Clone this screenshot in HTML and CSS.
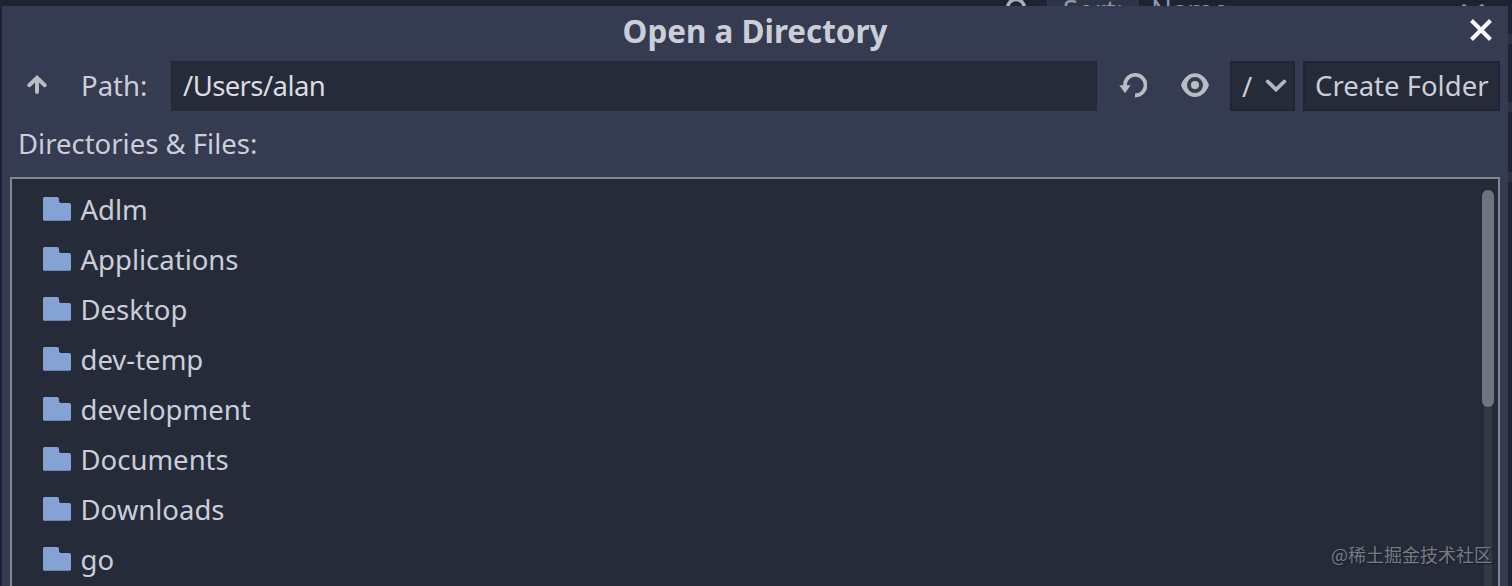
FILE: index.html
```html
<!DOCTYPE html>
<html lang="en">
<head>
<meta charset="utf-8">
<title>Open a Directory</title>
<link rel="stylesheet" href="styles.css">
</head>
<body>
<div class="backdrop">
  <svg class="search" width="24" height="24" viewBox="0 0 24 24"><circle cx="12" cy="9" r="8.5"/></svg>
  <span class="sort-label">Sort:</span>
  <span class="sort-value">Name</span>
  <svg class="sort-arrow" width="24" height="12" viewBox="0 0 24 12"><path d="M3 3l9 8 9-8"/></svg>
  <i class="edge edge-a"></i><i class="edge edge-b"></i><i class="edge edge-c"></i>
</div>
<main class="dialog">
  <header class="titlebar">
    <h1 class="title">Open a Directory</h1>
    <svg class="close" width="24" height="24" viewBox="0 0 24 24"><path d="M2.5 2.5l19 19M21.5 2.5l-19 19"/></svg>
  </header>
  <div class="toolbar">
    <svg class="icon up" width="28" height="28" viewBox="0 0 28 28"><path d="M14 21V7.5M6.2 14.2L14 6.8l7.8 7.4"/></svg>
    <span class="path-label">Path:</span>
    <div class="path-input">/Users/alan</div>
    <svg class="icon reload" width="28" height="28" viewBox="0 0 28 28"><path class="arc" d="M6 15.3A10.3 10.3 0 1 1 16 24.5"/><path class="head" d="M0.3 14.2h11.3l-5.5 8z"/></svg>
    <svg class="icon eye" width="28" height="28" viewBox="0 0 28 28"><path fill-rule="evenodd" d="M14 2.2C20 2.2 25.5 7 27.7 13.2Q28 14.1 27.7 15C25.5 21.2 20 26 14 26S2.5 21.2.3 15Q0 14.1.3 13.2C2.5 7 8 2.2 14 2.2zM14 6.1a8 8 0 1 0 0 16 8 8 0 0 0 0-16z"/><circle cx="14" cy="14.1" r="4.1"/></svg>
    <div class="button drive"><span>/</span><svg width="22" height="14" viewBox="0 0 22 14"><path d="M2.7 2.5l8.3 8 8.3-8"/></svg></div>
    <div class="button create">Create Folder</div>
  </div>
  <div class="section-label">Directories &amp; Files:</div>
  <section class="list">
    <svg class="defs" width="0" height="0"><symbol id="folder" viewBox="0 0 28 24"><path d="M1.5 0H14q2 0 2 2v2q0 2 2 2h8.3q1.7 0 1.7 1.7v14.5q0 1.5-1.5 1.5h-25Q0 23.7 0 22.2V1.5Q0 0 1.5 0z"/></symbol></svg>
    <ul class="files">
      <li><svg class="folder"><use href="#folder"/></svg>Adlm</li>
      <li><svg class="folder"><use href="#folder"/></svg>Applications</li>
      <li><svg class="folder"><use href="#folder"/></svg>Desktop</li>
      <li><svg class="folder"><use href="#folder"/></svg>dev-temp</li>
      <li><svg class="folder"><use href="#folder"/></svg>development</li>
      <li><svg class="folder"><use href="#folder"/></svg>Documents</li>
      <li><svg class="folder"><use href="#folder"/></svg>Downloads</li>
      <li><svg class="folder"><use href="#folder"/></svg>go</li>
    </ul>
    <div class="scrollbar"><div class="track"></div><div class="thumb"></div></div>
  </section>
</main>
<div class="watermark">@稀土掘金技术社区</div>
</body>
</html>
```
FILE: styles.css
```css
* { box-sizing: border-box; }
body {
  margin: 0;
  position: relative;
  width: 1512px;
  height: 586px;
  overflow: hidden;
  padding: 6px 4px 0 2px;
  background: #1e2333;
  color: #cbced8;
  font: 27.5px/50px "Noto Sans", sans-serif;
}
svg { display: block; flex: none; }
.backdrop { position: absolute; inset: 0; overflow: hidden; color: #9297a3; }
.backdrop::before { content: ""; position: absolute; left: 1047px; top: 0; width: 92px; height: 6px; background: #2c3446; }
.search { position: absolute; left: 1004px; top: -1px; fill: none; stroke: #aaadb7; stroke-width: 3.5; }
.sort-label, .sort-value { position: absolute; top: -15px; }
.sort-label { left: 1063px; }
.sort-value { left: 1151px; }
.sort-arrow { position: absolute; left: 1461px; top: 3px; fill: none; stroke: #8b909d; stroke-width: 4; stroke-linecap: round; }
.edge { position: absolute; right: 0; width: 4px; height: 10px; background: #2b3244; }
.edge-a { top: 34px; }
.edge-b { top: 102px; }
.edge-c { top: 172px; }
.dialog { position: relative; height: 580px; background: #353b50; display: flex; flex-direction: column; }
.titlebar { height: 55px; display: grid; grid-template-columns: 1fr auto 1fr; align-items: start; }
.title { grid-column: 2; margin: 0; font-size: 31.4px; line-height: 49px; font-weight: 700; }
.close { justify-self: end; margin: 12px 15px 0 0; fill: none; stroke: #fafbff; stroke-width: 4; }
.toolbar { height: 50px; display: flex; align-items: center; padding: 0 8px 0 21px; }
.icon { fill: #b8bdc2; margin-top: -2px; }
.up { fill: none; stroke: #b8bdc2; stroke-width: 4; stroke-linecap: round; }
.path-label { padding-left: 30px; flex: 0 0 120px; line-height: 50px; }
.path-input { width: 926px; height: 50px; padding-left: 11px; background: #252b38; border: 1px solid #222838; line-height: 47px; color: #dadce2; letter-spacing: -0.6px; }
.reload { margin-left: 22px; }
.reload .arc { fill: none; stroke: #b8bdc2; stroke-width: 3.8; }
.eye { margin-left: 34px; }
.button { height: 50px; background: #252b38; border: 2px solid #1f2534; line-height: 45px; }
.drive { width: 65px; margin-left: 21px; padding-left: 10px; display: flex; align-items: center; }
.drive svg { margin-left: 13px; fill: none; stroke: #b1b5c0; stroke-width: 3.8; stroke-linecap: round; }
.create { width: 197px; margin-left: 8px; padding-left: 10px; white-space: nowrap; }
.section-label { height: 66px; padding: 8px 0 0 16px; }
.list { flex: 1; margin: 0 8px; border: 2px solid #81868f; border-bottom: 0; background: #252b38; display: flex; justify-content: space-between; overflow: hidden; }
.defs { position: absolute; }
.files { list-style: none; margin: 0; padding: 6px 0 0 31px; }
.files li { height: 50px; display: flex; align-items: center; gap: 9.5px; }
.folder { width: 28px; height: 24px; fill: #84a2d3; margin-top: -2px; }
.scrollbar { width: 12px; margin: 11px 4px 0 0; display: grid; justify-items: center; }
.track, .thumb { grid-area: 1 / 1; }
.track { width: 8px; background: #343946; }
.thumb { width: 12px; height: 217px; border-radius: 6px; background: #70747f; }
.watermark { position: absolute; left: 1331px; top: 541px; font: 18px/26px "Noto Sans CJK SC", sans-serif; color: #777b84; text-shadow: 1px 1px 1px #181d28; white-space: nowrap; }
```
